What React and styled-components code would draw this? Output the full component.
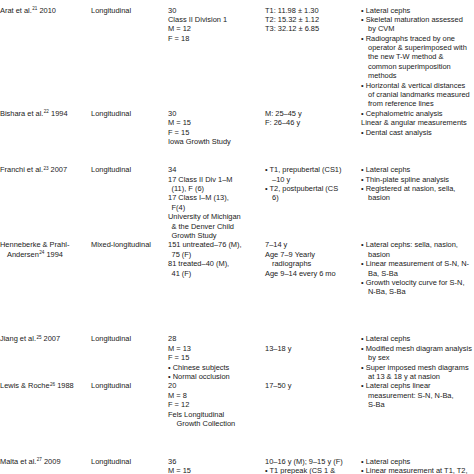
import React from "react";
import styled, { createGlobalStyle } from "styled-components";

const Global = createGlobalStyle`
  html, body {
    margin: 0;
    padding: 0;
    background: #ffffff;
    overflow: hidden;
  }
  body {
    font-family: "Liberation Sans", Arial, Helvetica, sans-serif;
  }
`;

const LH = 9.4;

const Table = styled.div`
  display: flex;
  flex-direction: column;
  padding-top: 5.5px;
  width: 474px;
  color: #1a1a1a;
  font-size: 7.45px;
  line-height: ${LH}px;
  white-space: nowrap;
`;

const Row = styled.div`
  display: grid;
  grid-template-columns: 91px 77px 97px 96px 1fr;
  min-height: ${(p) => p.$lines * LH}px;
  align-items: start;
`;

const Cell = styled.div`
  display: flex;
  flex-direction: column;
  min-width: 0;
`;

const Line = styled.div`
  padding-left: ${(p) => p.$indent || 0}px;
  height: ${LH}px;
`;

const Sup = styled.sup`
  font-size: 4.6px;
  line-height: 0;
  vertical-align: 2.6px;
  margin-left: 0.4px;
`;

const Ref = ({ name, n, year }) => (
  <>
    {name}
    <Sup>{n}</Sup> {year}
  </>
);

const indents = [7, 0, 3.5, 7, 7];

const rows = [
  {
    lines: 11,
    cells: [
      [<Ref name="Arat et al." n="21" year="2010" />],
      ["Longitudinal"],
      ["30", "Class II Division 1", "M = 12", "F = 18"],
      ["T1: 11.98 ± 1.30", "T2: 15.32 ± 1.12", "T3: 32.12 ± 6.85"],
      [
        "• Lateral cephs",
        "• Skeletal maturation assessed",
        ">by CVM",
        "• Radiographs traced by one",
        ">operator & superimposed with",
        ">the new T-W method &",
        ">common superimposition",
        ">methods",
        "• Horizontal & vertical distances",
        ">of cranial landmarks measured",
        ">from reference lines",
      ],
    ],
  },
  {
    lines: 6,
    cells: [
      [<Ref name="Bishara et al." n="22" year="1994" />],
      ["Longitudinal"],
      ["30", "M = 15", "F = 15", "Iowa Growth Study"],
      ["M: 25–45 y", "F: 26–46 y"],
      ["• Cephalometric analysis", "Linear & angular measurements", "• Dental cast analysis"],
    ],
  },
  {
    lines: 8,
    cells: [
      [<Ref name="Franchi et al." n="23" year="2007" />],
      ["Longitudinal"],
      [
        "34",
        "17 Class II Div 1–M",
        ">(11), F (6)",
        "17 Class I–M (13),",
        ">F(4)",
        "University of Michigan",
        ">& the Denver Child",
        ">Growth Study",
      ],
      ["• T1, prepubertal (CS1)", ">–10 y", "• T2, postpubertal (CS", ">6)"],
      [
        "• Lateral cephs",
        "• Thin-plate spline analysis",
        "• Registered at nasion, sella,",
        ">basion",
      ],
    ],
  },
  {
    lines: 10,
    cells: [
      ["Henneberke & Prahl-", { indent: true, node: <Ref name="Andersen" n="24" year="1994" /> }],
      ["Mixed-longitudinal"],
      ["151 untreated–76 (M),", ">75 (F)", "81 treated–40 (M),", ">41 (F)"],
      ["7–14 y", "Age 7–9 Yearly", ">radiographs", "Age 9–14 every 6 mo"],
      [
        "• Lateral cephs: sella, nasion,",
        ">basion",
        "• Linear measurement of S-N, N-",
        ">Ba, S-Ba",
        "• Growth velocity curve for S-N,",
        ">N-Ba, S-Ba",
      ],
    ],
  },
  {
    lines: 5,
    cells: [
      [<Ref name="Jiang et al." n="25" year="2007" />],
      ["Longitudinal"],
      ["28", "M = 13", "F = 15", "• Chinese subjects", "• Normal occlusion"],
      ["", "13–18 y"],
      [
        "• Lateral cephs",
        "• Modified mesh diagram analysis",
        ">by sex",
        "• Super imposed mesh diagrams",
        ">at 13 & 18 y at nasion",
      ],
    ],
  },
  {
    lines: 8,
    cells: [
      [<Ref name="Lewis & Roche" n="26" year="1988" />],
      ["Longitudinal"],
      ["20", "M = 8", "F = 12", "Fels Longitudinal", ">>Growth Collection"],
      ["17–50 y"],
      ["• Lateral cephs linear", ">measurement: S-N, N-Ba,", ">S-Ba"],
    ],
  },
  {
    lines: 3,
    cells: [
      [<Ref name="Malta et al." n="27" year="2009" />],
      ["Longitudinal"],
      ["36", "M = 15"],
      ["10–16 y (M); 9–15 y (F)", "• T1 prepeak (CS 1 &"],
      ["• Lateral cephs", "• Linear measurement at T1, T2,"],
    ],
  },
];

function renderLine(item, col, i) {
  if (typeof item === "string") {
    if (item.startsWith(">>")) {
      return (
        <Line key={i} $indent={8.5}>
          {item.slice(2)}
        </Line>
      );
    }
    if (item.startsWith(">")) {
      return (
        <Line key={i} $indent={indents[col]}>
          {item.slice(1)}
        </Line>
      );
    }
    return <Line key={i}>{item || "\u00a0"}</Line>;
  }
  if (item && item.node) {
    return (
      <Line key={i} $indent={item.indent ? indents[col] : 0}>
        {item.node}
      </Line>
    );
  }
  return <Line key={i}>{item}</Line>;
}

export default function App() {
  return (
    <>
      <Global />
      <Table>
        {rows.map((row, r) => (
          <Row key={r} $lines={row.lines}>
            {row.cells.map((cell, c) => (
              <Cell key={c}>{cell.map((item, i) => renderLine(item, c, i))}</Cell>
            ))}
          </Row>
        ))}
      </Table>
    </>
  );
}
